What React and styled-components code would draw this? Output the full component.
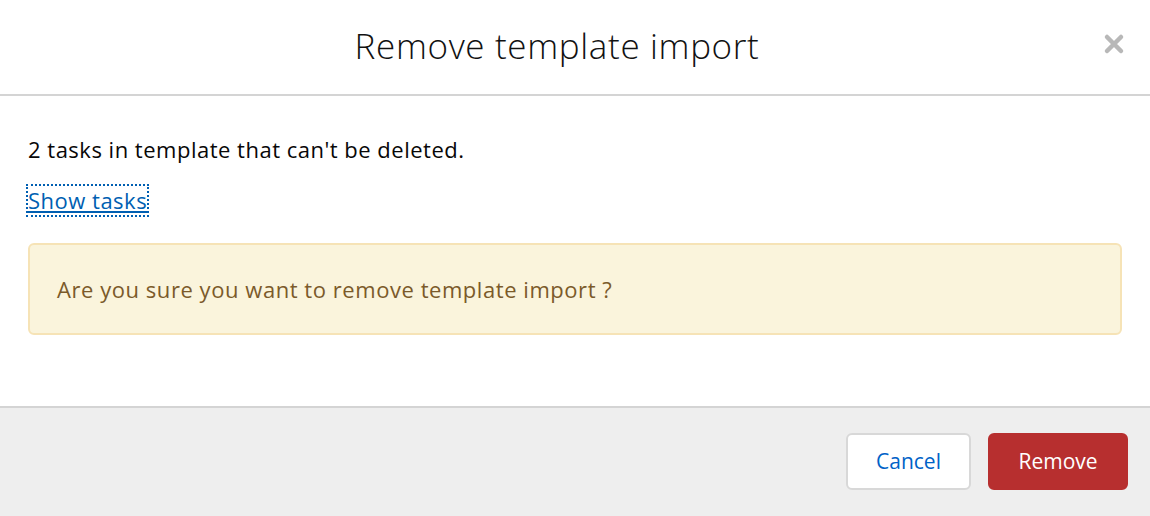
import React from "react";
import styled, { createGlobalStyle } from "styled-components";

const Global = createGlobalStyle`
  html, body { margin: 0; padding: 0; background: #fff; }
  body { font-family: "Open Sans", "Liberation Sans", sans-serif; }
  * { box-sizing: border-box; }
`;

const Modal = styled.div`
  width: 1150px;
  height: 516px;
  display: flex;
  flex-direction: column;
  background: #fff;
`;

const Header = styled.header`
  position: relative;
  height: 96px;
  border-bottom: 2px solid #d4d4d4;
  display: flex;
  align-items: center;
  justify-content: center;
  padding-right: 36px;
`;

const Title = styled.h1`
  margin: 0 0 4px;
  font-family: "Open Sans", sans-serif;
  font-weight: 300;
  font-size: 35px;
  letter-spacing: 0.65px;
  color: #111;
`;

const Close = styled.button`
  position: absolute;
  right: 24px;
  top: 32px;
  width: 24px;
  height: 24px;
  border: 0;
  background: transparent;
  padding: 0;
  cursor: pointer;
`;

const Body = styled.main`
  flex: 1;
  padding: 38px 28px 0;
  display: flex;
  flex-direction: column;
  align-items: flex-start;
`;

const Message = styled.p`
  margin: 0;
  font-size: 22px;
  line-height: 30px;
  letter-spacing: 0.5px;
  color: #080707;
`;

const Link = styled.a`
  display: block;
  margin-top: 22px;
  font-size: 22px;
  line-height: 29px;
  letter-spacing: 0.5px;
  color: #005fb2;
  text-decoration: underline;
  outline: 2px dotted #005fb2;
  outline-offset: 0;
`;

const Alert = styled.div`
  align-self: stretch;
  margin-top: 28px;
  height: 92px;
  border: 2px solid #f6e3b6;
  border-radius: 6px;
  background: #faf4dc;
  display: flex;
  align-items: center;
  padding: 0 27px;
  font-size: 22px;
  letter-spacing: 0.55px;
  color: #7b5a2a;
`;

const Footer = styled.footer`
  height: 110px;
  background: #eeeeee;
  border-top: 2px solid #d4d4d4;
  display: flex;
  justify-content: flex-end;
  align-items: center;
  gap: 17px;
  padding: 0 22px 2px 0;
`;

const Button = styled.button`
  height: 57px;
  padding: 0;
  width: ${(p) => (p.$primary ? "140px" : "125px")};
  border-radius: 6px;
  font-family: "Open Sans", sans-serif;
  font-size: 21px;
  cursor: pointer;
  border: 2px solid ${(p) => (p.$primary ? "#b72f2f" : "#d8d8d8")};
  background: ${(p) => (p.$primary ? "#b72f2f" : "#fff")};
  color: ${(p) => (p.$primary ? "#fff" : "#0062c7")};
`;

export default function App() {
  return (
    <>
      <Global />
      <Modal>
        <Header>
          <Title>Remove template import</Title>
          <Close aria-label="Close">
            <svg width="24" height="24" viewBox="0 0 24 24">
              <path d="M5 5 L19 19 M19 5 L5 19" stroke="#b8b8b8" strokeWidth="4.5" strokeLinecap="round" />
            </svg>
          </Close>
        </Header>
        <Body>
          <Message>2 tasks in template that can't be deleted.</Message>
          <Link href="#">Show tasks</Link>
          <Alert>Are you sure you want to remove template import ?</Alert>
        </Body>
        <Footer>
          <Button>Cancel</Button>
          <Button $primary>Remove</Button>
        </Footer>
      </Modal>
    </>
  );
}
